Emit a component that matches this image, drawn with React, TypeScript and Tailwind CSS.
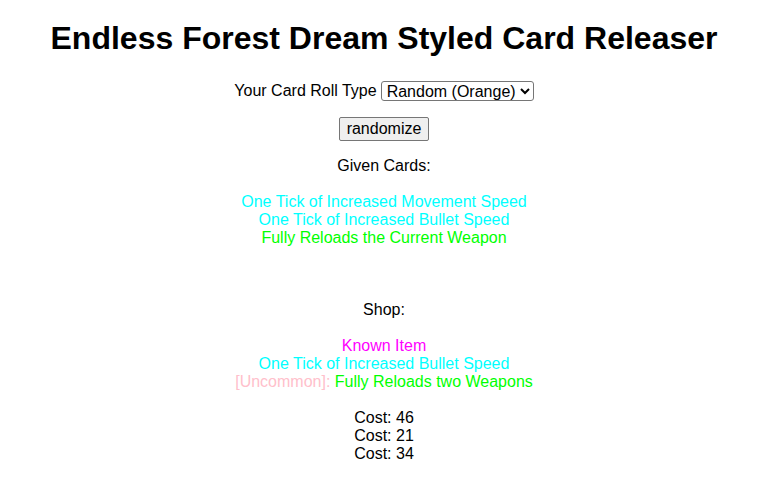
import { useState } from "react";

const given = [
  { text: "One Tick of Increased Movement Speed", color: "text-[#00ffff]" },
  { text: "One Tick of Increased Bullet Speed", color: "text-[#00ffff]" },
  { text: "Fully Reloads the Current Weapon", color: "text-[#00ff00]" },
];

const costs = [46, 21, 34];

export default function App() {
  const [rollType, setRollType] = useState("orange");

  return (
    <main className="flex flex-col items-center text-center text-black bg-white font-['Liberation_Sans',Arial,sans-serif] text-[16px] leading-[18px] min-h-[480px]">
      <h1 className="mt-[20px] text-[32px] leading-[37px] font-bold">
        Endless Forest Dream Styled Card Releaser
      </h1>

      <div className="mt-[24px] flex items-center h-[20px]">
        <label htmlFor="roll-type" className="mr-[4px]">
          Your Card Roll Type
        </label>
        <select
          id="roll-type"
          value={rollType}
          onChange={(e) => setRollType(e.target.value)}
          className="h-[20px] border border-[#767676] rounded-[3px] bg-white text-[16px] leading-[18px] px-[1px]"
        >
          <option value="orange">Random (Orange)</option>
          <option value="blue">Random (Blue)</option>
          <option value="green">Random (Green)</option>
        </select>
      </div>

      <button
        type="button"
        className="mt-[16px] h-[24px] px-[7px] bg-[#efefef] border border-[#767676] rounded-[2px] text-[16px] leading-[18px]"
      >
        randomize
      </button>

      <div className="mt-[16px]">Given Cards:</div>

      <div className="mt-[18px] flex flex-col">
        {given.map((card, i) => (
          <span key={i} className={card.color}>
            {card.text}
          </span>
        ))}
      </div>

      <div className="mt-[54px]">Shop:</div>

      <div className="mt-[18px] flex flex-col">
        <span className="text-[#ff00ff]">Known Item</span>
        <span className="text-[#00ffff]">One Tick of Increased Bullet Speed</span>
        <span>
          <span className="text-[#ffc0cb]">[Uncommon]:</span>{" "}
          <span className="text-[#00ff00]">Fully Reloads two Weapons</span>
        </span>
      </div>

      <div className="mt-[18px] flex flex-col">
        {costs.map((c, i) => (
          <span key={i}>Cost: {c}</span>
        ))}
      </div>
    </main>
  );
}
